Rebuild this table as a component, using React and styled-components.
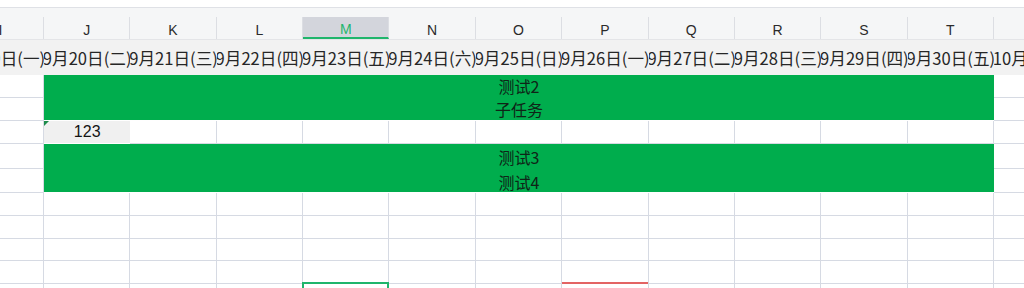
import React from "react";
import styled, { createGlobalStyle, css } from "styled-components";

const COL_W = 950 / 11;
const GREEN = "#00ad4d";
const GRID = "#d6dae3";

const columns = ["I", "J", "K", "L", "M", "N", "O", "P", "Q", "R", "S", "T", "U"];
const dates = [
  "9月19日(一)",
  "9月20日(二)",
  "9月21日(三)",
  "9月22日(四)",
  "9月23日(五)",
  "9月24日(六)",
  "9月25日(日)",
  "9月26日(一)",
  "9月27日(二)",
  "9月28日(三)",
  "9月29日(四)",
  "9月30日(五)",
  "10月1日(六)",
];
const rowHeights = [23, 23, 23, 25, 24, 23, 23, 22, 23, 23];

// merged task bars: rows are 0-based body rows, columns J..T
const bars = [
  { row: 0, span: 2, lines: ["测试2", "子任务"], lineHeight: 23, nudge: 0 },
  { row: 3, span: 2, lines: ["测试3", "测试4"], lineHeight: 25, nudge: 3 },
];

const GlobalStyle = createGlobalStyle`
  html, body {
    margin: 0;
    padding: 0;
    background: #ffffff;
    overflow: hidden;
  }
  body {
    font-family: "Noto Sans CJK SC", "Noto Sans", sans-serif;
  }
`;

const Page = styled.div`
  width: 1024px;
  height: 288px;
  overflow: hidden;
  background: #ffffff;
`;

const TopEdge = styled.div`
  height: 7px;
  border-bottom: 1px solid #dfe1e6;
  background: #ffffff;
`;

const Strip = styled.div`
  height: 9px;
  background: #f5f6f7;
`;

const Sheet = styled.div`
  margin-left: ${44 - COL_W}px;
  width: ${COL_W * 13}px;
`;

const ColumnRow = styled.div`
  display: grid;
  grid-template-columns: repeat(13, ${COL_W}px);
  height: 22px;
  background: #f5f6f7;
`;

const ColumnHead = styled.div`
  box-sizing: border-box;
  display: flex;
  align-items: center;
  justify-content: center;
  padding-top: 3px;
  border-right: 1px solid #dcdee3;
  font-family: "Liberation Sans", "Noto Sans", sans-serif;
  font-size: 14px;
  color: #2b2b2b;
  ${(p) =>
    p.$active &&
    css`
      background: #d3d5dc;
      color: #1fb56c;
      border-bottom: 2px solid #1fb56c;
      padding-top: 4px;
    `}
`;

const DateRow = styled.div`
  display: grid;
  grid-template-columns: repeat(13, ${COL_W}px);
  height: 36px;
  background: #f2f2f2;
  border-top: 1px solid #e4e5e8;
  box-sizing: border-box;
`;

const DateCell = styled.div`
  display: flex;
  align-items: center;
  justify-content: center;
  overflow: hidden;
  white-space: nowrap;
  font-size: 16.6px;
  color: #262626;
`;

const Body = styled.div`
  display: grid;
  grid-template-columns: repeat(13, ${COL_W}px);
  grid-template-rows: ${rowHeights.map((h) => h + "px").join(" ")};
`;

const Cell = styled.div`
  position: relative;
  box-sizing: border-box;
  border-right: 1px solid ${GRID};
  border-bottom: 1px solid ${GRID};
  ${(p) =>
    p.$selected &&
    css`
      &::after {
        content: "";
        position: absolute;
        left: -1px;
        right: -1px;
        top: -2px;
        bottom: -1px;
        border: 2px solid #1fb56c;
      }
    `}
  ${(p) =>
    p.$flagged &&
    css`
      &::after {
        content: "";
        position: absolute;
        left: 0;
        right: 0;
        top: -2px;
        height: 2px;
        background: #e36464;
      }
    `}
`;

const NumberCell = styled(Cell)`
  display: flex;
  align-items: center;
  justify-content: center;
  background: #f0f0f0;
  border-right: none;
  border-bottom-color: #ffffff;
  font-family: "Liberation Sans", "Noto Sans", sans-serif;
  font-size: 16px;
  color: #141414;

  &::before {
    content: "";
    position: absolute;
    left: 0;
    top: 0;
    border-top: 5px solid #1e8c4b;
    border-right: 5px solid transparent;
  }
`;

const Bar = styled.div`
  grid-column: 2 / 13;
  grid-row: ${(p) => p.$row + 1} / span ${(p) => p.$span};
  background: ${GREEN};
  display: flex;
  flex-direction: column;
  align-items: center;
  justify-content: center;
  padding-top: ${(p) => p.$nudge}px;
  border-bottom: 1px solid #ffffff;
  box-sizing: border-box;
`;

const BarLine = styled.div`
  font-size: 16px;
  line-height: ${(p) => p.$lh}px;
  color: #0f2417;
`;

function isCovered(r, c) {
  if (c < 1 || c > 11) return false;
  return bars.some((b) => r >= b.row && r < b.row + b.span);
}

export default function App() {
  const cells = [];
  rowHeights.forEach((_, r) => {
    columns.forEach((col, c) => {
      if (isCovered(r, c)) return;
      const key = `${col}${r}`;
      const pos = { gridColumn: c + 1, gridRow: r + 1 };
      if (r === 2 && c === 1) {
        cells.push(
          <NumberCell key={key} style={pos}>
            123
          </NumberCell>
        );
        return;
      }
      cells.push(
        <Cell
          key={key}
          style={pos}
          $selected={r === 9 && col === "M"}
          $flagged={r === 9 && col === "P"}
        />
      );
    });
  });

  return (
    <Page>
      <GlobalStyle />
      <TopEdge />
      <Strip />
      <Sheet>
        <ColumnRow>
          {columns.map((col) => (
            <ColumnHead key={col} $active={col === "M"}>
              {col}
            </ColumnHead>
          ))}
        </ColumnRow>
        <DateRow>
          {dates.map((d) => (
            <DateCell key={d}>{d}</DateCell>
          ))}
        </DateRow>
        <Body>
          {cells}
          {bars.map((b) => (
            <Bar key={b.row} $row={b.row} $span={b.span} $nudge={b.nudge}>
              {b.lines.map((t) => (
                <BarLine key={t} $lh={b.lineHeight}>
                  {t}
                </BarLine>
              ))}
            </Bar>
          ))}
        </Body>
      </Sheet>
    </Page>
  );
}
